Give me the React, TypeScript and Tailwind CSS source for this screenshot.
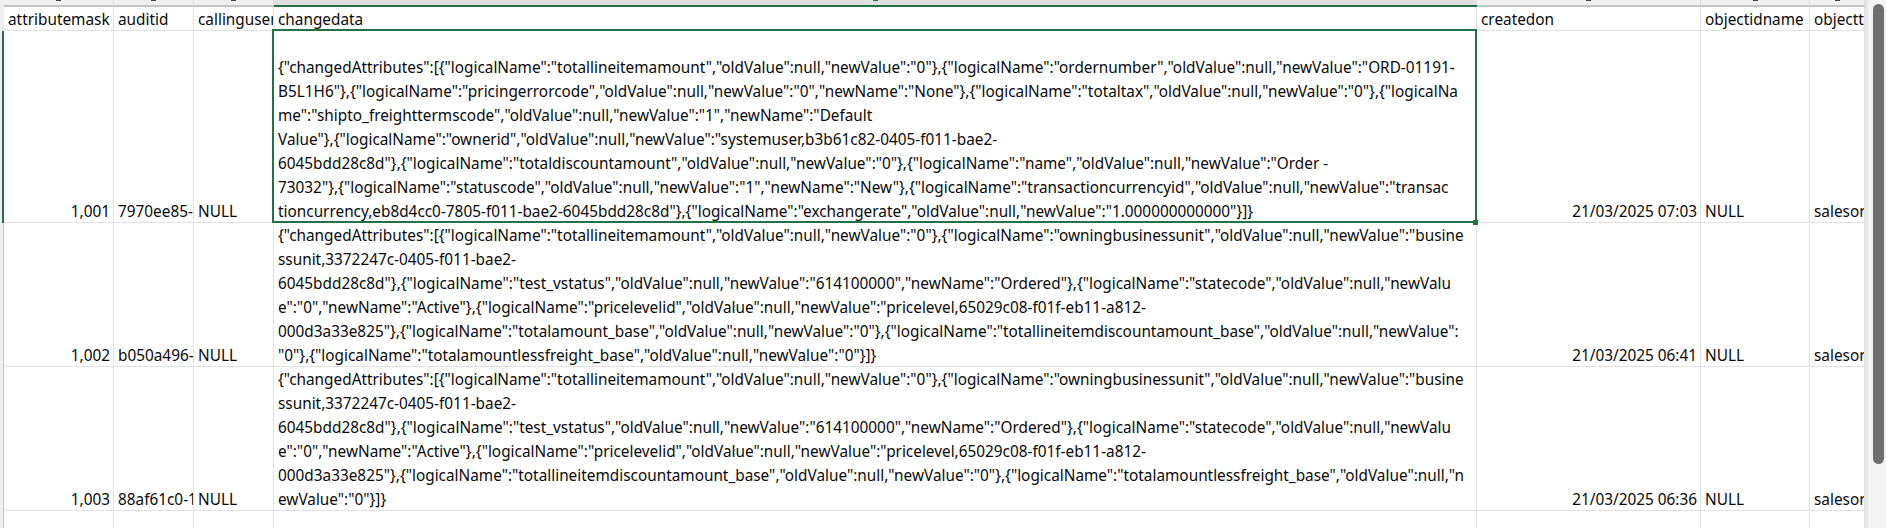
const widths = ["w-[110px]", "w-[80px]", "w-[80px]", "w-[1203px]", "w-[224px]", "w-[109px]", "w-[55px]"];

const headers = ["attributemask", "auditid", "callinguser", "changedata", "createdon", "objectidname", "objecttypecode"];

const rows = [
  {
    height: "h-[192px]",
    mask: "1,001",
    audit: "7970ee85-",
    created: "21/03/2025 07:03",
    lines: [
      `{"changedAttributes":[{"logicalName":"totallineitemamount","oldValue":null,"newValue":"0"},{"logicalName":"ordernumber","oldValue":null,"newValue":"ORD-01191-`,
      `B5L1H6"},{"logicalName":"pricingerrorcode","oldValue":null,"newValue":"0","newName":"None"},{"logicalName":"totaltax","oldValue":null,"newValue":"0"},{"logicalNa`,
      `me":"shipto_freighttermscode","oldValue":null,"newValue":"1","newName":"Default`,
      `Value"},{"logicalName":"ownerid","oldValue":null,"newValue":"systemuser,b3b61c82-0405-f011-bae2-`,
      `6045bdd28c8d"},{"logicalName":"totaldiscountamount","oldValue":null,"newValue":"0"},{"logicalName":"name","oldValue":null,"newValue":"Order -`,
      `73032"},{"logicalName":"statuscode","oldValue":null,"newValue":"1","newName":"New"},{"logicalName":"transactioncurrencyid","oldValue":null,"newValue":"transac`,
      `tioncurrency,eb8d4cc0-7805-f011-bae2-6045bdd28c8d"},{"logicalName":"exchangerate","oldValue":null,"newValue":"1.000000000000"}]}`,
    ],
  },
  {
    height: "h-[144px]",
    mask: "1,002",
    audit: "b050a496-",
    created: "21/03/2025 06:41",
    lines: [
      `{"changedAttributes":[{"logicalName":"totallineitemamount","oldValue":null,"newValue":"0"},{"logicalName":"owningbusinessunit","oldValue":null,"newValue":"busine`,
      `ssunit,3372247c-0405-f011-bae2-`,
      `6045bdd28c8d"},{"logicalName":"test_vstatus","oldValue":null,"newValue":"614100000","newName":"Ordered"},{"logicalName":"statecode","oldValue":null,"newValu`,
      `e":"0","newName":"Active"},{"logicalName":"pricelevelid","oldValue":null,"newValue":"pricelevel,65029c08-f01f-eb11-a812-`,
      `000d3a33e825"},{"logicalName":"totalamount_base","oldValue":null,"newValue":"0"},{"logicalName":"totallineitemdiscountamount_base","oldValue":null,"newValue":`,
      `"0"},{"logicalName":"totalamountlessfreight_base","oldValue":null,"newValue":"0"}]}`,
    ],
  },
  {
    height: "h-[144px]",
    mask: "1,003",
    audit: "88af61c0-1",
    created: "21/03/2025 06:36",
    lines: [
      `{"changedAttributes":[{"logicalName":"totallineitemamount","oldValue":null,"newValue":"0"},{"logicalName":"owningbusinessunit","oldValue":null,"newValue":"busine`,
      `ssunit,3372247c-0405-f011-bae2-`,
      `6045bdd28c8d"},{"logicalName":"test_vstatus","oldValue":null,"newValue":"614100000","newName":"Ordered"},{"logicalName":"statecode","oldValue":null,"newValu`,
      `e":"0","newName":"Active"},{"logicalName":"pricelevelid","oldValue":null,"newValue":"pricelevel,65029c08-f01f-eb11-a812-`,
      `000d3a33e825"},{"logicalName":"totallineitemdiscountamount_base","oldValue":null,"newValue":"0"},{"logicalName":"totalamountlessfreight_base","oldValue":null,"n`,
      `ewValue":"0"}]}`,
    ],
  },
];

function Cell({
  width,
  right,
  children,
}: {
  width: string;
  right?: boolean;
  children?: React.ReactNode;
}) {
  return (
    <div
      className={`${width} flex shrink-0 items-end overflow-hidden whitespace-nowrap border-r border-[#e1e1e1] pl-[4px] leading-[24px] ${
        right ? "justify-end pr-[3px]" : "justify-start"
      }`}
    >
      <div className="translate-y-[1px]">{children}</div>
    </div>
  );
}

function LetterCell({ width, selected }: { width: string; selected?: boolean }) {
  return (
    <div
      className={`${width} flex shrink-0 justify-center border-b-2 ${
        selected ? "border-[#217346] bg-[#e0e0e0]" : "border-r border-[#c4c4c4] border-r-[#dcdcdc]"
      }`}
    >
      <div className={`h-[1px] w-[5px] ${selected ? "bg-[#217346]" : "bg-[#444]"}`} />
    </div>
  );
}

export default function App() {
  return (
    <div className="flex h-[528px] w-[1886px] overflow-hidden bg-white font-['Noto_Sans',sans-serif] text-[15.35px] text-[#0a0a0a]">
      {/* Sheet */}
      <div className="relative flex w-[1865px] shrink-0">
        {/* Row header sliver */}
        <div className="flex w-[4px] shrink-0 flex-col bg-[#efefef]">
          <div className="h-[31px]" />
          <div className="h-[192px] border-r-2 border-[#217346]" />
          <div className="flex-1 border-r border-[#c4c4c4]" />
        </div>

        <div className="flex min-w-0 flex-1 flex-col">
          {/* Column letters, only their bottom edge is in view */}
          <div className="flex h-[7px] shrink-0 bg-[#f0f0f0]">
            {widths.map((w, i) => (
              <LetterCell key={headers[i]} width={w} selected={i === 3} />
            ))}
          </div>

          <div className="flex h-[24px] shrink-0 border-b border-[#e1e1e1]">
            {headers.map((name, i) => (
              <Cell key={name} width={widths[i]}>
                {name}
              </Cell>
            ))}
          </div>

          {rows.map((row) => (
            <div key={row.mask} className={`flex ${row.height} shrink-0 border-b border-[#e1e1e1]`}>
              <Cell width={widths[0]} right>
                {row.mask}
              </Cell>
              <Cell width={widths[1]}>{row.audit}</Cell>
              <Cell width={widths[2]}>NULL</Cell>
              <Cell width={widths[3]}>
                {row.lines.map((line) => (
                  <div key={line}>{line}</div>
                ))}
              </Cell>
              <Cell width={widths[4]} right>
                {row.created}
              </Cell>
              <Cell width={widths[5]}>NULL</Cell>
              <Cell width={widths[6]}>salesorder</Cell>
            </div>
          ))}

          <div className="flex min-h-0 flex-1">
            {widths.map((w, i) => (
              <Cell key={headers[i]} width={w} />
            ))}
          </div>
        </div>

        {/* Selected cell outline and fill handle */}
        <div className="pointer-events-none absolute top-[29px] left-[272px] h-[194px] w-[1205px] border-2 border-[#217346]" />
        <div className="pointer-events-none absolute top-[220px] left-[1473px] h-[5px] w-[5px] bg-[#217346]" />
      </div>

      {/* Scrollbar */}
      <div className="flex flex-1 border-l-[3px] border-[#e4e6e8] bg-[#f3f3f3] pt-[4px] pl-[5px]">
        <div className="h-[460px] w-[11px] rounded-full bg-[#6e6e6e]" />
      </div>
    </div>
  );
}
